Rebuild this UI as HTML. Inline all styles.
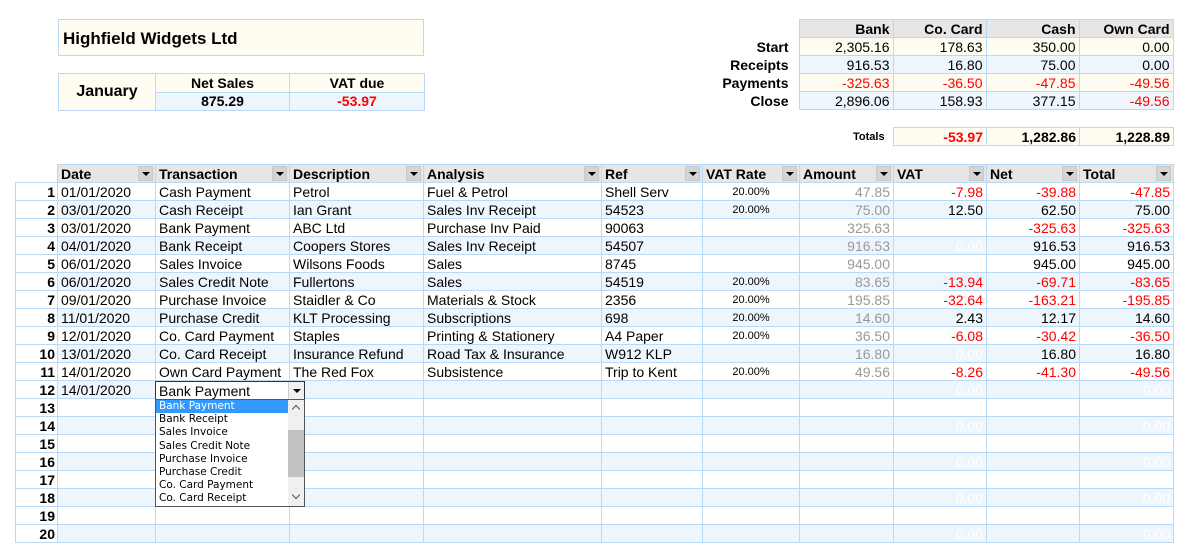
<!DOCTYPE html>
<html><head><meta charset="utf-8"><style>
*{box-sizing:border-box;margin:0;padding:0}
body{width:1200px;height:555px;background:#fff;font-family:"Liberation Sans",Arial,sans-serif;font-size:14px;color:#000;position:relative;overflow:hidden}
.a{position:absolute}
table{border-collapse:collapse;table-layout:fixed;position:absolute}
td{border:1px solid #b9d9f5;height:18px;padding:0 3px;white-space:nowrap;overflow:hidden;line-height:16px}
.r{text-align:right}.c{text-align:center}.b{font-weight:bold}
.red{color:#f00}.g{color:#999}.w{color:#fff}
.cr{background:#fffdf2}.bl{background:#eef6fd}
#m tr:nth-child(odd) td{background:#eef6fd}
#m tr:first-child td{background:#e6e6e6;font-weight:bold;position:relative}
#m td.n{background:#fff!important;font-weight:bold;text-align:right;padding-right:2px}
#m tr:first-child td.n{border:none;border-bottom:1px solid #b9d9f5;background:#fff!important}
.vr{font-size:11px;text-align:center}
.f{position:absolute;right:2px;top:1px;width:15px;height:15px;background:#d4d4d4;border:1px solid #c8c8c8}
.f:after{content:"";position:absolute;left:3px;top:5px;border-left:4px solid transparent;border-right:4px solid transparent;border-top:4px solid #000}
</style></head><body>

<div class="a cr" style="left:58px;top:19px;width:366px;height:37px;border:1px solid #b9d9f5;padding:9px 4px;font-weight:bold;font-size:17px">Highfield Widgets Ltd</div>

<table style="left:58px;top:73px;width:366px">
<col style="width:97px"><col style="width:134px"><col style="width:135px">
<tr><td rowspan="2" class="cr c b" style="font-size:16px;height:37px">January</td><td class="cr c b">Net Sales</td><td class="cr c b">VAT due</td></tr>
<tr><td class="bl c b">875.29</td><td class="bl c b red">-53.97</td></tr>
</table>

<table style="left:700px;top:19px;width:473px">
<col style="width:99px"><col style="width:94px"><col style="width:93px"><col style="width:93px"><col style="width:94px">
<tr><td style="border:none"></td><td class="r b" style="background:#e6e6e6">Bank</td><td class="r b" style="background:#e6e6e6">Co. Card</td><td class="r b" style="background:#e6e6e6">Cash</td><td class="r b" style="background:#e6e6e6">Own Card</td></tr>
<tr><td class="r b" style="border:none;padding-right:10px">Start</td><td class="cr r">2,305.16</td><td class="cr r">178.63</td><td class="cr r">350.00</td><td class="cr r">0.00</td></tr>
<tr><td class="r b" style="border:none;padding-right:10px">Receipts</td><td class="bl r">916.53</td><td class="bl r">16.80</td><td class="bl r">75.00</td><td class="bl r">0.00</td></tr>
<tr><td class="r b" style="border:none;padding-right:10px">Payments</td><td class="cr r red">-325.63</td><td class="cr r red">-36.50</td><td class="cr r red">-47.85</td><td class="cr r red">-49.56</td></tr>
<tr><td class="r b" style="border:none;padding-right:10px">Close</td><td class="bl r">2,896.06</td><td class="bl r">158.93</td><td class="bl r">377.15</td><td class="bl r red">-49.56</td></tr>
</table>

<div class="a b" style="left:853px;top:131px;font-size:11px">Totals</div>
<table style="left:893px;top:127px;width:280px">
<col style="width:93px"><col style="width:93px"><col style="width:94px">
<tr><td class="cr r b red">-53.97</td><td class="cr r b">1,282.86</td><td class="cr r b">1,228.89</td></tr>
</table>

<table id="m" style="left:15px;top:164px;width:1158px">
<col style="width:42px"><col style="width:98px"><col style="width:134px"><col style="width:134px"><col style="width:178px"><col style="width:101px"><col style="width:97px"><col style="width:94px"><col style="width:93px"><col style="width:93px"><col style="width:94px">
<tr><td class="n"></td><td>Date<span class="f"></span></td><td>Transaction<span class="f"></span></td><td>Description<span class="f"></span></td><td>Analysis<span class="f"></span></td><td>Ref<span class="f"></span></td><td>VAT Rate<span class="f"></span></td><td>Amount<span class="f"></span></td><td>VAT<span class="f"></span></td><td>Net<span class="f"></span></td><td>Total<span class="f"></span></td></tr>
<tr><td class="n">1</td><td>01/01/2020</td><td>Cash Payment</td><td>Petrol</td><td>Fuel &amp; Petrol</td><td>Shell Serv</td><td class="vr">20.00%</td><td class="r g">47.85</td><td class="r red">-7.98</td><td class="r red">-39.88</td><td class="r red">-47.85</td></tr>
<tr><td class="n">2</td><td>03/01/2020</td><td>Cash Receipt</td><td>Ian Grant</td><td>Sales Inv Receipt</td><td>54523</td><td class="vr">20.00%</td><td class="r g">75.00</td><td class="r">12.50</td><td class="r">62.50</td><td class="r">75.00</td></tr>
<tr><td class="n">3</td><td>03/01/2020</td><td>Bank Payment</td><td>ABC Ltd</td><td>Purchase Inv Paid</td><td>90063</td><td class="vr"></td><td class="r g">325.63</td><td class="r"></td><td class="r red">-325.63</td><td class="r red">-325.63</td></tr>
<tr><td class="n">4</td><td>04/01/2020</td><td>Bank Receipt</td><td>Coopers Stores</td><td>Sales Inv Receipt</td><td>54507</td><td class="vr"></td><td class="r g">916.53</td><td class="r w">0.00</td><td class="r">916.53</td><td class="r">916.53</td></tr>
<tr><td class="n">5</td><td>06/01/2020</td><td>Sales Invoice</td><td>Wilsons Foods</td><td>Sales</td><td>8745</td><td class="vr"></td><td class="r g">945.00</td><td class="r"></td><td class="r">945.00</td><td class="r">945.00</td></tr>
<tr><td class="n">6</td><td>06/01/2020</td><td>Sales Credit Note</td><td>Fullertons</td><td>Sales</td><td>54519</td><td class="vr">20.00%</td><td class="r g">83.65</td><td class="r red">-13.94</td><td class="r red">-69.71</td><td class="r red">-83.65</td></tr>
<tr><td class="n">7</td><td>09/01/2020</td><td>Purchase Invoice</td><td>Staidler &amp; Co</td><td>Materials &amp; Stock</td><td>2356</td><td class="vr">20.00%</td><td class="r g">195.85</td><td class="r red">-32.64</td><td class="r red">-163.21</td><td class="r red">-195.85</td></tr>
<tr><td class="n">8</td><td>11/01/2020</td><td>Purchase Credit</td><td>KLT Processing</td><td>Subscriptions</td><td>698</td><td class="vr">20.00%</td><td class="r g">14.60</td><td class="r">2.43</td><td class="r">12.17</td><td class="r">14.60</td></tr>
<tr><td class="n">9</td><td>12/01/2020</td><td>Co. Card Payment</td><td>Staples</td><td>Printing &amp; Stationery</td><td>A4 Paper</td><td class="vr">20.00%</td><td class="r g">36.50</td><td class="r red">-6.08</td><td class="r red">-30.42</td><td class="r red">-36.50</td></tr>
<tr><td class="n">10</td><td>13/01/2020</td><td>Co. Card Receipt</td><td>Insurance Refund</td><td>Road Tax &amp; Insurance</td><td>W912 KLP</td><td class="vr"></td><td class="r g">16.80</td><td class="r w">0.00</td><td class="r">16.80</td><td class="r">16.80</td></tr>
<tr><td class="n">11</td><td>14/01/2020</td><td>Own Card Payment</td><td>The Red Fox</td><td>Subsistence</td><td>Trip to Kent</td><td class="vr">20.00%</td><td class="r g">49.56</td><td class="r red">-8.26</td><td class="r red">-41.30</td><td class="r red">-49.56</td></tr>
<tr><td class="n">12</td><td>14/01/2020</td><td></td><td></td><td></td><td></td><td></td><td></td><td class="r w">0.00</td><td></td><td class="r w">0.00</td></tr>
<tr><td class="n">13</td><td></td><td></td><td></td><td></td><td></td><td></td><td></td><td></td><td></td><td></td></tr>
<tr><td class="n">14</td><td></td><td></td><td></td><td></td><td></td><td></td><td></td><td class="r w">0.00</td><td></td><td class="r w">0.00</td></tr>
<tr><td class="n">15</td><td></td><td></td><td></td><td></td><td></td><td></td><td></td><td></td><td></td><td></td></tr>
<tr><td class="n">16</td><td></td><td></td><td></td><td></td><td></td><td></td><td></td><td class="r w">0.00</td><td></td><td class="r w">0.00</td></tr>
<tr><td class="n">17</td><td></td><td></td><td></td><td></td><td></td><td></td><td></td><td></td><td></td><td></td></tr>
<tr><td class="n">18</td><td></td><td></td><td></td><td></td><td></td><td></td><td></td><td class="r w">0.00</td><td></td><td class="r w">0.00</td></tr>
<tr><td class="n">19</td><td></td><td></td><td></td><td></td><td></td><td></td><td></td><td></td><td></td><td></td></tr>
<tr><td class="n">20</td><td></td><td></td><td></td><td></td><td></td><td></td><td></td><td class="r w">0.00</td><td></td><td class="r w">0.00</td></tr>
</table>

<div class="a" style="left:155px;top:381px;width:150px;height:19px;border:1px solid #333;background:#fff;padding:1px 3px;line-height:16px">Bank Payment
<div class="a" style="right:0;top:0;width:16px;height:17px;background:#f0f0f0;border-left:1px solid #ccc"><div class="a" style="left:4px;top:7px;border-left:4px solid transparent;border-right:4px solid transparent;border-top:4px solid #000"></div></div></div>
<div class="a" style="left:155px;top:399px;width:150px;height:108px;border:1px solid #555;background:#fff;font-family:'DejaVu Sans',sans-serif;font-size:10.5px;line-height:13.2px;overflow:hidden">
<div style="background:#3399ff;color:#fff;width:133px;padding-left:3px">Bank Payment</div>
<div style="padding-left:3px">Bank Receipt</div>
<div style="padding-left:3px">Sales Invoice</div>
<div style="padding-left:3px">Sales Credit Note</div>
<div style="padding-left:3px">Purchase Invoice</div>
<div style="padding-left:3px">Purchase Credit</div>
<div style="padding-left:3px">Co. Card Payment</div>
<div style="padding-left:3px">Co. Card Receipt</div>
<div class="a" style="right:0;top:0;width:16px;height:106px;background:#f0f0f0">
<div class="a" style="left:4px;top:4px;width:6px;height:6px;border-left:1px solid #555;border-top:1px solid #555;transform:rotate(45deg);margin-left:1px;margin-top:2px"></div>
<div class="a" style="left:0;top:30px;width:16px;height:47px;background:#c2c2c2"></div>
<div class="a" style="left:5px;top:92px;width:6px;height:6px;border-right:1px solid #555;border-bottom:1px solid #555;transform:rotate(45deg)"></div>
</div></div>
</body></html>
